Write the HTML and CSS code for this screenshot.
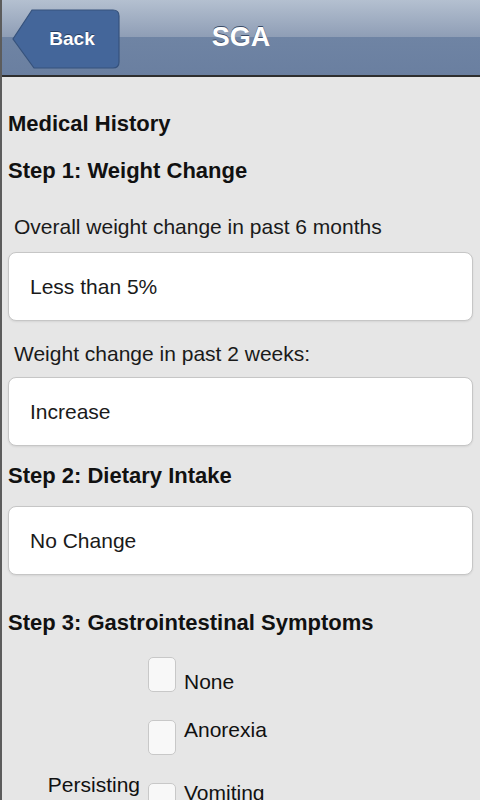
FILE: index.html
```html
<!DOCTYPE html>
<html lang="en">
<head>
    <meta charset="UTF-8">
    <meta name="viewport" content="width=device-width, initial-scale=1.0">
    <title>SGA</title>
    <link rel="stylesheet" href="styles.css">
</head>
<body>
<div class="page">

    <!-- Header -->
    <header class="header">
        <div class="header-left">
            <a href="#" class="back">
                <svg class="back-shape" viewBox="0 0 108 60" width="108" height="60">
                    <path d="M20 1 H101 Q107 1 107 7 V53 Q107 59 101 59 H22 L1 30 Z" fill="#44669a" stroke="#36527c" stroke-width="1.2"/>
                </svg>
                <span class="back-text">Back</span>
            </a>
        </div>
        <h1 class="title">SGA</h1>
        <div></div>
    </header>

    <!-- Content -->
    <div class="content">
        <h2 class="heading heading-first">Medical History</h2>
        <h2 class="heading heading-step1">Step 1: Weight Change</h2>

        <p class="label label-first">Overall weight change in past 6 months</p>
        <div class="select select-first">Less than 5%</div>

        <p class="label label-second">Weight change in past 2 weeks:</p>
        <div class="select select-second">Increase</div>

        <h2 class="heading heading-step2">Step 2: Dietary Intake</h2>
        <div class="select select-third">No Change</div>

        <h2 class="heading heading-step3">Step 3: Gastrointestinal Symptoms</h2>

        <div class="symptoms">
            <div class="side"></div>
            <label class="check-row row-end"><span class="box"></span><span>None</span></label>

            <div class="side"></div>
            <label class="check-row"><span class="box"></span><span>Anorexia</span></label>

            <div class="side side-persist">Persisting</div>
            <label class="check-row"><span class="box"></span><span>Vomiting</span></label>
        </div>
    </div>

</div>
</body>
</html>
```

FILE: styles.css
```css
/* General Styles */
body {
    margin: 0;
    padding: 0;
    background-color: #e6e6e6;
    font-family: "Liberation Sans", Arial, sans-serif;
    color: #111;
}

.page {
    border-left: 2px solid #5c5c5c;
    min-height: 800px;
}

/* Header */
.header {
    display: grid;
    grid-template-columns: 1fr auto 1fr;
    align-items: center;
    height: 75px;
    border-bottom: 2px solid #2e2e2e;
    background: linear-gradient(#b4c0d0, #8f9eb6 49%, #6f84a4 50%, #6a7fa0);
}

.header-left {
    padding-left: 10px;
}

.back {
    position: relative;
    display: flex;
    align-items: center;
    justify-content: center;
    width: 108px;
    height: 60px;
    margin-top: 2px;
    text-decoration: none;
}

.back-shape {
    position: absolute;
    top: 0;
    left: 0;
}

.back-text {
    position: relative;
    padding-left: 12px;
    color: #fff;
    font-weight: bold;
    font-size: 19px;
    text-shadow: 0 -1px 0 #2a3f60;
}

.title {
    margin: 0;
    color: #fff;
    font-size: 27px;
    font-weight: bold;
    text-shadow: 0 -1px 0 #3b4d68;
}

/* Content */
.content {
    padding: 0 7px 0 6px;
}

.heading {
    margin: 0;
    font-size: 22px;
    line-height: 28px;
    font-weight: bold;
}

.heading-first { margin-top: 33px; }
.heading-step1 { margin-top: 19px; }
.heading-step2 { margin-top: 16px; }
.heading-step3 { margin-top: 34px; }

.label {
    margin: 0;
    padding-left: 6px;
    font-size: 21px;
    line-height: 28px;
    color: #1a1a1a;
}

.label-first { margin-top: 28px; }
.label-second { margin-top: 19px; }

.select {
    display: flex;
    align-items: center;
    height: 67px;
    padding-left: 21px;
    background: #fff;
    border: 1px solid #c6c6c6;
    border-radius: 8px;
    box-shadow: 0 1px 2px rgba(0, 0, 0, 0.08);
    font-size: 21px;
    color: #1a1a1a;
}

.select-first { margin-top: 11px; }
.select-second { margin-top: 9px; }
.select-third { margin-top: 16px; }

/* Symptoms */
.symptoms {
    display: grid;
    grid-template-columns: 132px 1fr;
    column-gap: 8px;
    row-gap: 28px;
    margin-top: 20px;
}

.side {
    text-align: right;
    font-size: 21px;
    line-height: 20px;
}

.side-persist {
    margin-top: -8px;
}

.check-row {
    display: flex;
    align-items: flex-start;
    gap: 8px;
    font-size: 21px;
    line-height: 20px;
}

.row-end {
    align-items: flex-end;
}

.box {
    display: block;
    width: 26px;
    height: 33px;
    background: #f8f8f8;
    border: 1px solid #c8c8c8;
    border-radius: 5px;
}
```
